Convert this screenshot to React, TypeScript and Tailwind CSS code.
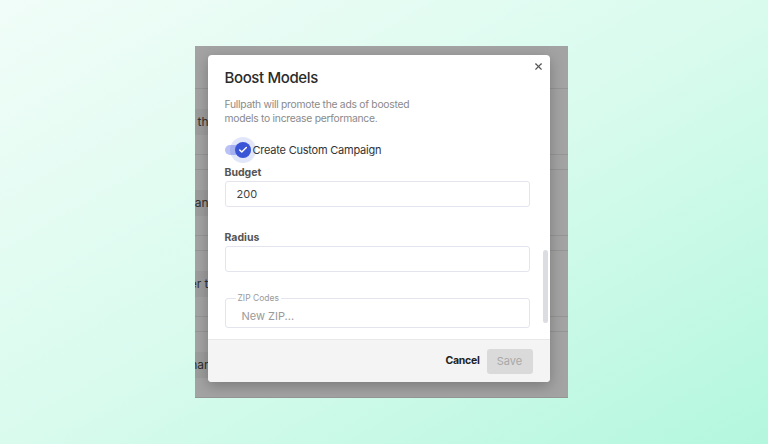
import { Check, X } from "lucide-react";

const rows = ["Filter th", "Lorem an", "Order t", "Germanar"];

function Backdrop() {
  return (
    <div className="flex flex-col w-full h-full">
      <div className="h-[48px] border-b border-[#959595]" />
      {rows.map((text, i) => (
        <div key={i} className="flex flex-col">
          {i > 0 && <div className="h-[15px] border-b border-[#959595]" />}
          <div className="h-[66px] border-b border-[#959595] flex items-center">
            <div className="w-[14px] flex justify-end overflow-hidden bg-[#9c9c9c] py-1">
              <span className="whitespace-nowrap text-[12px] text-[#2f2f2f]">{text}</span>
            </div>
          </div>
        </div>
      ))}
    </div>
  );
}

function Toggle() {
  return (
    <div className="relative w-[28px] h-[20px] shrink-0">
      <div className="absolute left-0 top-[5px] w-[26px] h-[10px] rounded-full bg-[#b9c1f5]" />
      <div className="absolute left-[5px] top-[-3px] w-[26px] h-[26px] rounded-full bg-[#3d5ad8]/15" />
      <div className="absolute left-[10px] top-[2px] w-[16px] h-[16px] rounded-full bg-[#3a55d6] flex items-center justify-center">
        <Check size={10} strokeWidth={3.5} className="text-white" />
      </div>
    </div>
  );
}

function Field({ label, value }: { label: string; value?: string }) {
  return (
    <div className="flex flex-col">
      <label className="text-[10.5px] font-bold text-[#555] h-[14px] leading-[14px]">{label}</label>
      <div className="mt-[1px] h-[26px] border border-[#e3e4ee] rounded-[3px] flex items-center px-[11px] text-[11px] text-[#444]">
        {value}
      </div>
    </div>
  );
}

export default function App() {
  return (
    <div
      className="w-full h-[444px] flex items-center justify-center bg-linear-to-br from-[#f1fdf8] via-[#d9fbee] to-[#b3f7de]"
      style={{ fontFamily: "Inter, 'Open Sans', sans-serif" }}
    >
      <div className="relative w-[373px] h-[352px] bg-[#a3a3a3] overflow-hidden ml-[-6px]">
        <Backdrop />

        <div className="absolute left-[13px] top-[9px] w-[342px] h-[327px] bg-white rounded-[4px] shadow-[0_4px_14px_rgba(0,0,0,0.25)] flex flex-col overflow-hidden">
          <button className="absolute right-[6px] top-[6px] text-[#555]">
            <X size={11} strokeWidth={2.5} />
          </button>

          <div className="relative flex-1 overflow-hidden pl-[17px] pr-[20px]">
            <h2 className="mt-[13px] text-[15px] font-medium text-[#2b2b2b] leading-[20px] tracking-tight">Boost Models</h2>
            <p className="mt-[9px] w-[200px] text-[10.3px] leading-[14px] text-[#8a8a8a] tracking-tight">
              Fullpath will promote the ads of boosted models to increase performance.
            </p>

            <div className="mt-[15px] flex items-center h-[20px]">
              <Toggle />
              <span className="text-[11px] text-[#333] tracking-[-0.02em]">Create Custom Campaign</span>
            </div>

            <div className="mt-[6px]">
              <Field label="Budget" value="200" />
            </div>
            <div className="mt-[24px]">
              <Field label="Radius" />
            </div>

            <fieldset className="mt-[21px] h-[35px] border border-[#e3e4ee] rounded-[3px] px-[10px]">
              <legend className="px-[2px] text-[8.5px] text-[#9a9a9a] leading-[10px]">ZIP Codes</legend>
              <div className="pl-[6px] mt-[5px] text-[11px] text-[#9a9a9a]">New ZIP...</div>
            </fieldset>

            <div className="absolute right-[2px] top-[195px] w-[5px] h-[73px] rounded-full bg-[#dcdde3]" />
          </div>

          <div className="h-[43px] shrink-0 bg-[#f4f4f4] border-t border-[#e8e8e8] flex items-center justify-end gap-[7px] pr-[17px]">
            <button className="text-[10.5px] font-bold text-[#222] tracking-tight">Cancel</button>
            <button className="w-[46px] h-[25px] rounded-[3px] bg-[#dadada] text-[11px] text-[#a8a8a8]">Save</button>
          </div>
        </div>
      </div>
    </div>
  );
}
